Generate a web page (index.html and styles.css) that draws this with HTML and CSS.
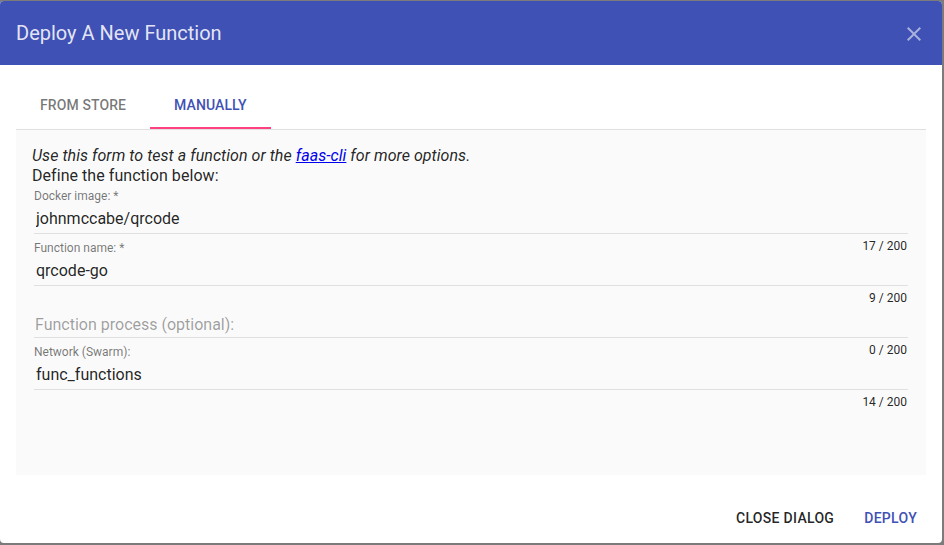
FILE: index.html
```html
<!DOCTYPE html>
<html lang="en">
<head>
  <meta charset="UTF-8">
  <title>Deploy A New Function</title>
  <link rel="stylesheet" href="styles.css">
</head>
<body>
  <div class="dialog">
    <div class="dialog-header">
      <h2 class="dialog-title">Deploy A New Function</h2>
      <a href="javascript:;" class="close-btn">
        <svg viewBox="0 0 24 24" width="24" height="24"><path d="M19 6.41L17.59 5 12 10.59 6.41 5 5 6.41 10.59 12 5 17.59 6.41 19 12 13.41 17.59 19 19 17.59 13.41 12z"/></svg>
      </a>
    </div>
    <div class="dialog-body">
      <div class="tabs">
        <a href="javascript:;" class="tab">From store</a>
        <a href="javascript:;" class="tab active">Manually</a>
      </div>
      <div class="tab-panel">
        <p class="intro"><em>Use this form to test a function or the <a href="javascript:;">faas-cli</a> for more options.</em><br>Define the function below:</p>
        <div class="field first">
          <label class="field-label">Docker image: *</label>
          <input class="field-input" type="text" value="johnmccabe/qrcode">
          <div class="counter">17 / 200</div>
        </div>
        <div class="field">
          <label class="field-label">Function name: *</label>
          <input class="field-input" type="text" value="qrcode-go">
          <div class="counter">9 / 200</div>
        </div>
        <div class="field empty">
          <label class="field-label"></label>
          <input class="field-input" type="text" placeholder="Function process (optional):">
          <div class="counter">0 / 200</div>
        </div>
        <div class="field">
          <label class="field-label">Network (Swarm):</label>
          <input class="field-input" type="text" value="func_functions">
          <div class="counter">14 / 200</div>
        </div>
      </div>
    </div>
    <div class="dialog-actions">
      <a href="javascript:;" class="btn">Close dialog</a>
      <a href="javascript:;" class="btn primary">Deploy</a>
    </div>
  </div>
</body>
</html>
```

FILE: styles.css
```css
* {
  box-sizing: border-box;
}
body {
  margin: 0;
  background: #7b7b7b;
  font-family: Roboto, "Liberation Sans", sans-serif;
}
.dialog {
  width: 942px;
  height: 542px;
  margin-top: 1px;
  background: #fff;
  border-radius: 4px;
  overflow: hidden;
  display: flex;
  flex-direction: column;
}
.dialog-header {
  height: 64px;
  flex: none;
  background: #3f51b5;
  padding: 0 16px;
  display: flex;
  align-items: center;
  justify-content: space-between;
}
.dialog-title {
  margin: 0;
  font-size: 20px;
  font-weight: 400;
  color: rgba(255, 255, 255, .87);
}
.close-btn {
  display: block;
  width: 24px;
  height: 24px;
  margin-top: 1px;
}
.close-btn svg {
  display: block;
  fill: rgba(255, 255, 255, .55);
}
.dialog-body {
  flex: 1;
  padding: 16px 16px 0;
  display: flex;
  flex-direction: column;
}
.tabs {
  display: flex;
  border-bottom: 1px solid #e0e0e0;
}
.tab {
  height: 48px;
  line-height: 48px;
  padding: 0 24px;
  border-bottom: 2px solid transparent;
  text-transform: uppercase;
  text-decoration: none;
  letter-spacing: .1px;
  font-size: 14px;
  font-weight: 500;
  color: rgba(0, 0, 0, .54);
}
.tab.active {
  color: #3f51b5;
  border-bottom-color: #ff4081;
}
.tab-panel {
  flex: 1;
  background: #fafafa;
  padding: 16px 16px 0;
}
.intro {
  margin: 0;
  font-size: 16px;
  line-height: 20px;
  letter-spacing: .05px;
  color: rgba(0, 0, 0, .87);
}
.intro a {
  color: #0000ee;
}
.field {
  margin: 0 2px;
}
.field.first {
  margin-top: 2px;
}
.field-label {
  display: block;
  height: 16px;
  line-height: 16px;
  font-size: 12px;
  color: rgba(0, 0, 0, .54);
}
.field-input {
  display: block;
  width: 100%;
  height: 30px;
  margin: 0;
  padding: 0 2px;
  border: 0;
  border-bottom: 1px solid #e0e0e0;
  background: transparent;
  outline: none;
  font-family: inherit;
  font-size: 16px;
  color: rgba(0, 0, 0, .87);
}
.field.empty .field-input {
  padding: 3px 1px 0;
}
.field-input::placeholder {
  color: rgba(0, 0, 0, .38);
}
.counter {
  height: 0;
  margin-top: 6px;
  padding-right: 1px;
  line-height: 13px;
  font-size: 12px;
  text-align: right;
  color: rgba(0, 0, 0, .87);
}
.dialog-actions {
  flex: none;
  display: flex;
  justify-content: flex-end;
  gap: 14px;
  padding: 25px 17px 7px;
}
.btn {
  height: 36px;
  line-height: 36px;
  padding: 0 8px;
  text-transform: uppercase;
  text-decoration: none;
  letter-spacing: .3px;
  font-size: 14px;
  font-weight: 500;
  color: rgba(0, 0, 0, .87);
}
.btn.primary {
  color: #3f51b5;
}
```
